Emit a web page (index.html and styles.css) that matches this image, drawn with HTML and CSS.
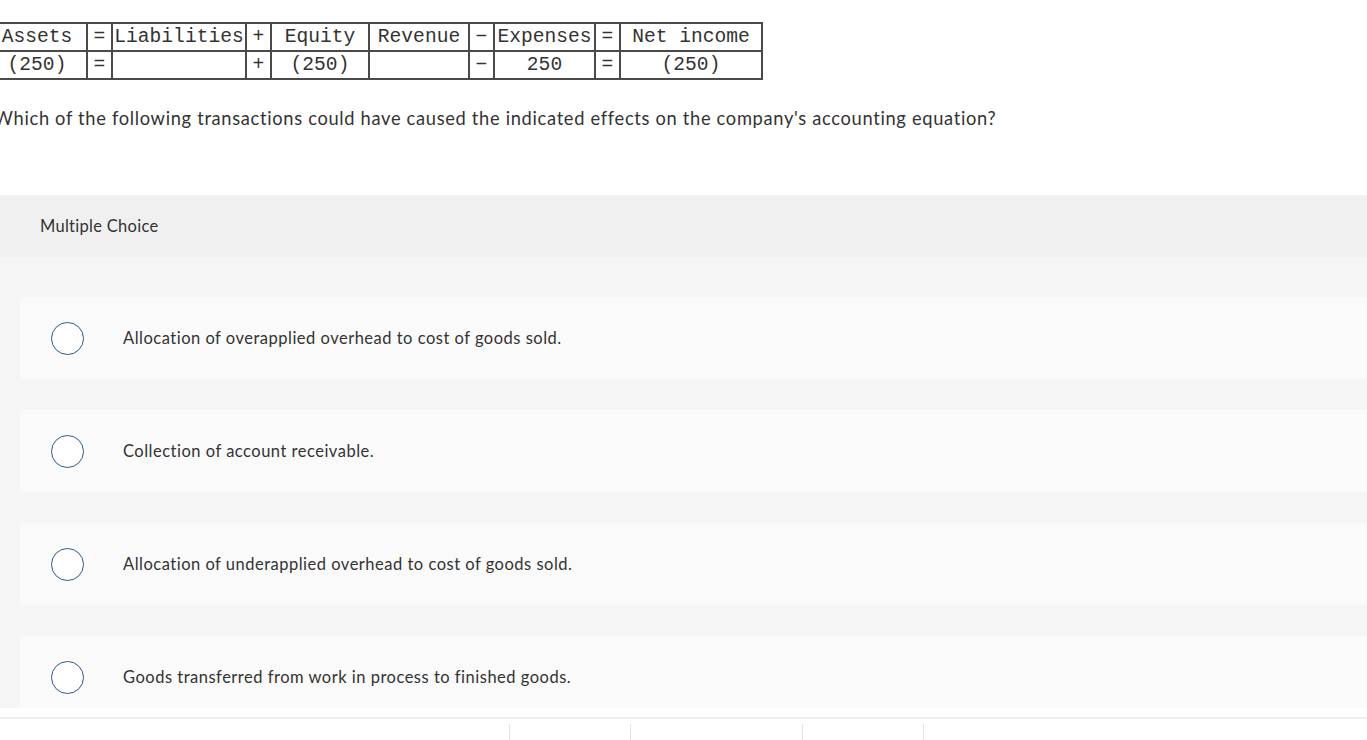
FILE: index.html
```html
<!DOCTYPE html>
<html>
<head>
<meta charset="utf-8">
<link rel="stylesheet" href="styles.css">
</head>
<body>
<div class="question">
  <table class="eq">
    <colgroup>
      <col class="c-assets"><col class="c-op"><col class="c-liab"><col class="c-op"><col class="c-equity"><col class="c-rev"><col class="c-op"><col class="c-exp"><col class="c-op"><col class="c-ni">
    </colgroup>
    <tr><td class="first">Assets</td><td>=</td><td>Liabilities</td><td>+</td><td>Equity</td><td>Revenue</td><td>&minus;</td><td>Expenses</td><td>=</td><td>Net income</td></tr>
    <tr><td class="first">(250)</td><td>=</td><td></td><td>+</td><td>(250)</td><td></td><td>&minus;</td><td>250</td><td>=</td><td>(250)</td></tr>
  </table>
  <p class="prompt">Which of the following transactions could have caused the indicated effects on the company's accounting equation?</p>
</div>
<div class="mc-head">Multiple Choice</div>
<div class="options">
  <div class="option"><span class="radio"></span><span class="label">Allocation of overapplied overhead to cost of goods sold.</span></div>
  <div class="option"><span class="radio"></span><span class="label">Collection of account receivable.</span></div>
  <div class="option"><span class="radio"></span><span class="label">Allocation of underapplied overhead to cost of goods sold.</span></div>
  <div class="option"><span class="radio"></span><span class="label">Goods transferred from work in process to finished goods.</span></div>
</div>
<div class="footer">
  <div class="seg s1"></div>
  <div class="seg s2"></div>
  <div class="seg s3"></div>
  <div class="seg s4"></div>
</div>
</body>
</html>
```
FILE: styles.css
```css
html, body {
  margin: 0;
  padding: 0;
  background: #fff;
  overflow: hidden;
}
body {
  font-family: Lato, "Open Sans", sans-serif;
  color: #333;
}
.question {
  margin-left: -10px;
  padding-top: 22px;
  height: 173px;
}
.eq {
  border-collapse: collapse;
  font-family: "Liberation Mono", monospace;
  font-size: 19.6px;
  color: #333;
  table-layout: fixed;
}
.eq td {
  border: 2px solid #4a4a4a;
  height: 26px;
  padding: 0 1px;
  text-align: center;
  white-space: nowrap;
  line-height: 26px;
}
.eq td.first {
  padding-right: 5px;
}
.c-assets { width: 96px; }
.c-op { width: 25px; }
.c-liab { width: 134px; }
.c-equity { width: 98px; }
.c-rev { width: 100px; }
.c-exp { width: 101px; }
.c-ni { width: 142px; }
.prompt {
  margin: 26px 0 0 4px;
  font-size: 18.3px;
  letter-spacing: 0.68px;
  line-height: 24px;
  color: #333;
  white-space: nowrap;
}
.mc-head {
  background: #f0f0f0;
  height: 62px;
  display: flex;
  align-items: center;
  padding-left: 40px;
  font-size: 16.5px;
  letter-spacing: 0.28px;
  color: #333;
}
.options {
  background: #f5f5f5;
  height: 411px;
  padding: 40px 0 0 20px;
  overflow: hidden;
  display: flex;
  flex-direction: column;
  gap: 31px;
}
.option {
  flex: none;
  background: #fafafa;
  border-radius: 4px 0 0 4px;
  height: 82px;
  display: flex;
  align-items: center;
  padding-left: 31px;
}
.radio {
  flex: none;
  width: 31px;
  height: 31px;
  border: 1.5px solid #2a5a8a;
  border-radius: 50%;
  background: #fff;
  margin-right: 39px;
}
.label {
  font-size: 16.5px;
  letter-spacing: 0.5px;
  color: #333;
}
.footer {
  margin-top: 9px;
  border-top: 2px solid #efefef;
  display: flex;
  padding-top: 5px;
  height: 20px;
}
.seg {
  height: 20px;
}
.s1 { width: 509px; }
.s2, .s3, .s4 { border-left: 1px solid #e4e4e4; }
.s2 { width: 120px; }
.s3 { width: 171px; }
.s4 { width: 120px; border-right: 1px solid #e4e4e4; }
```
